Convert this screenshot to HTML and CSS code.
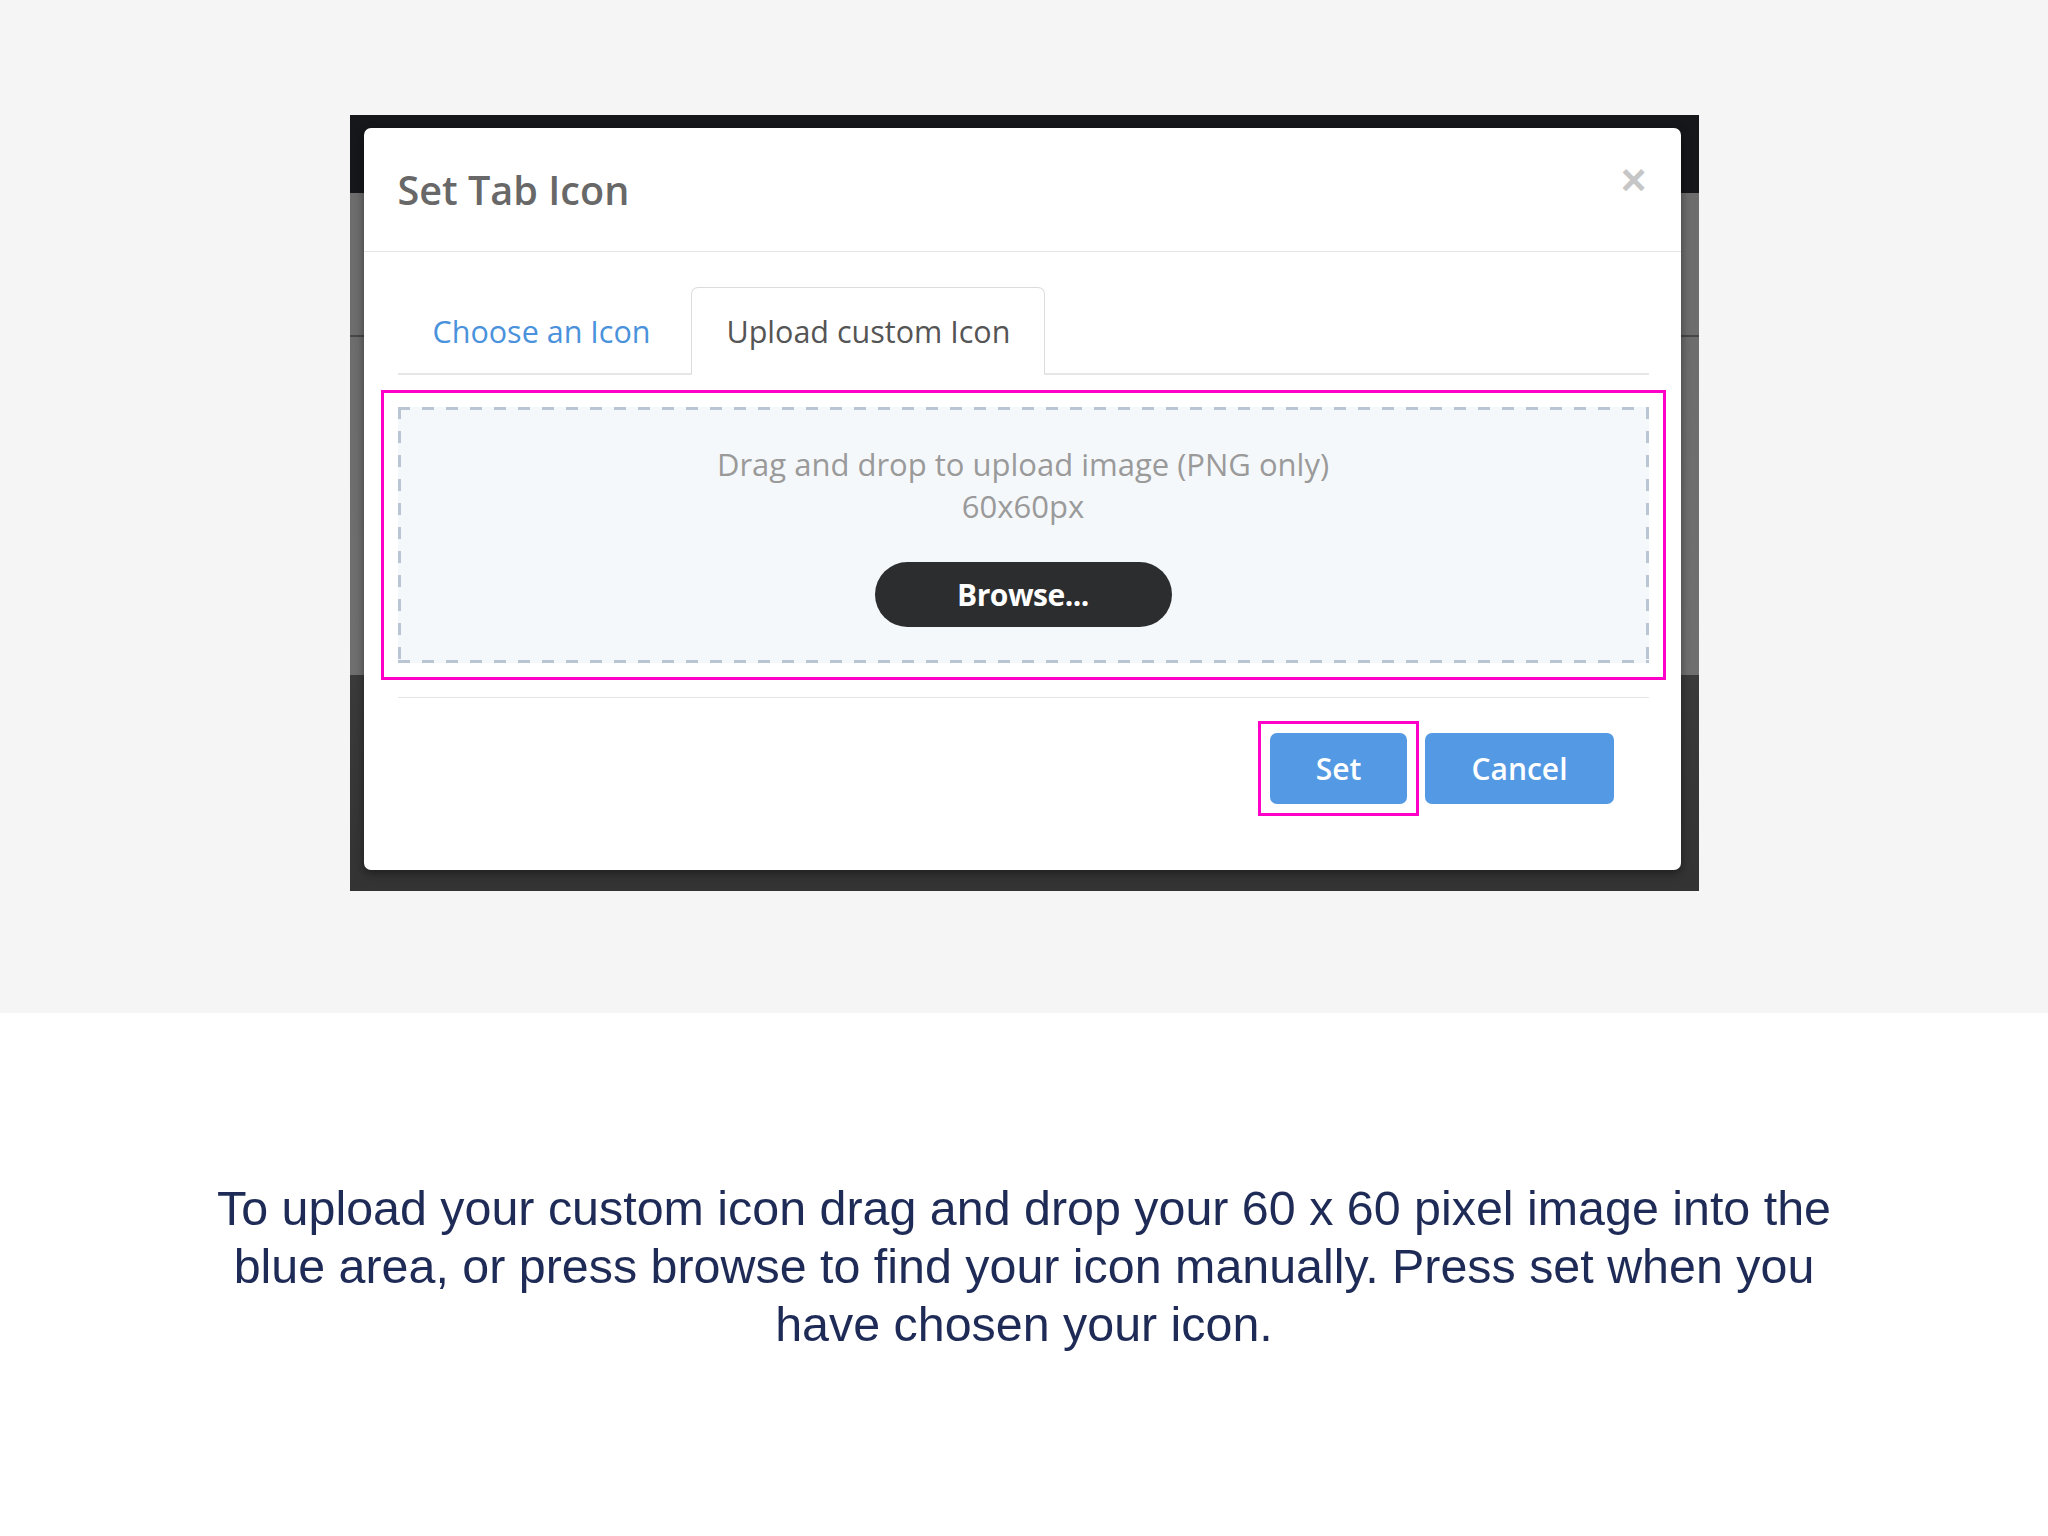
FILE: index.html
```html
<!DOCTYPE html>
<html lang="en">
<head>
<meta charset="utf-8">
<title>Set Tab Icon</title>
<link rel="stylesheet" href="styles.css">
</head>
<body>
<section class="stage">
  <div class="frame">
    <div class="modal">
      <header class="modal-header">
        <h2 class="modal-title">Set Tab Icon</h2>
        <span class="close">&times;</span>
      </header>
      <div class="modal-body">
        <ul class="tabs">
          <li class="tab"><a class="tab-link">Choose an Icon</a></li>
          <li class="tab tab-active"><a class="tab-link">Upload custom Icon</a></li>
        </ul>
        <div class="dropzone highlight">
          <p class="drop-text">Drag and drop to upload image (PNG only)<br>60x60px</p>
          <button class="browse">Browse...</button>
        </div>
      </div>
      <footer class="modal-footer">
        <span class="highlight-small"><button class="btn">Set</button></span>
        <button class="btn">Cancel</button>
      </footer>
    </div>
  </div>
</section>
<section class="caption">
  <p class="caption-text">To upload your custom icon drag and drop your 60 x 60 pixel image into the blue area, or press browse to find your icon manually. Press set when you have chosen your icon.</p>
</section>
</body>
</html>
```
FILE: styles.css
```css
* { box-sizing: border-box; }
html, body { margin: 0; padding: 0; }
body {
  width: 2048px;
  min-height: 1536px;
  background: #ffffff;
  font-family: "Open Sans", "Liberation Sans", sans-serif;
}

.stage {
  height: 1013px;
  background: #f5f5f5;
  padding-top: 115px;
  display: flex;
  justify-content: center;
  align-items: flex-start;
}

.frame {
  width: 1349px;
  height: 776px;
  padding: 13px 18px 21px 14px;
  background: linear-gradient(to bottom,
    #15171b 0, #15171b 78px,
    #6d6d6d 78px, #6d6d6d 220px,
    #474747 220px, #474747 222px,
    #6d6d6d 222px, #6f6f6f 560px,
    #3a3a3a 560px, #333333 776px);
}

.modal {
  width: 1317px;
  height: 742px;
  background: #ffffff;
  border-radius: 7px;
  box-shadow: 0 3px 10px rgba(0, 0, 0, 0.45);
  display: flex;
  flex-direction: column;
}

.modal-header {
  height: 124px;
  border-bottom: 1px solid #e5e5e5;
  padding: 0 34px 0 34px;
  display: flex;
  justify-content: space-between;
  align-items: flex-start;
}

.modal-title {
  margin: 0;
  align-self: center;
  margin-top: 2px;
  font-size: 39.6px;
  font-weight: 600;
  line-height: 1.1;
  color: #686868;
}

.close {
  margin-top: 30px;
  font-family: "Liberation Sans", Arial, sans-serif;
  font-size: 44px;
  font-weight: 700;
  line-height: 1;
  color: #c6c6c6;
}

.modal-body {
  padding: 35px 32px 0 34px;
}

.tabs {
  list-style: none;
  margin: 0;
  padding: 0;
  display: flex;
  border-bottom: 2px solid #e6e6e6;
}

.tab {
  height: 88px;
  margin-right: 6px;
  margin-bottom: -2px;
  border: 1px solid transparent;
  border-radius: 7px 7px 0 0;
  display: flex;
  align-items: center;
}

.tab-link {
  padding: 0 34px;
  font-size: 30.5px;
  color: #4a92dc;
}

.tab-active {
  border-color: #dcdcdc;
  border-bottom-color: #ffffff;
  background: #ffffff;
}

.tab-active .tab-link {
  color: #555555;
}

.dropzone {
  margin-top: 32px;
  height: 256px;
  padding-top: 36px;
  background:
    repeating-linear-gradient(to right, #b9c5d3 0, #b9c5d3 12px, transparent 12px, transparent 24px) left top / 100% 3px no-repeat,
    repeating-linear-gradient(to right, #b9c5d3 0, #b9c5d3 12px, transparent 12px, transparent 24px) left bottom / 100% 3px no-repeat,
    repeating-linear-gradient(to bottom, #b9c5d3 0, #b9c5d3 12px, transparent 12px, transparent 24px) left top / 3px 100% no-repeat,
    repeating-linear-gradient(to bottom, #b9c5d3 0, #b9c5d3 12px, transparent 12px, transparent 24px) right top / 3px 100% no-repeat,
    #f5f8fa;
  display: flex;
  flex-direction: column;
  align-items: center;
}

.highlight {
  outline: 3px solid #ff00c8;
  outline-offset: 14px;
}

.drop-text {
  margin: 0;
  font-size: 31px;
  line-height: 42px;
  color: #9a9a9a;
  text-align: center;
}

.browse {
  margin-top: 35px;
  width: 297px;
  height: 65px;
  border: none;
  border-radius: 33px;
  background: #2b2d2f;
  color: #ffffff;
  font-family: "Open Sans", sans-serif;
  font-size: 30px;
  font-weight: 700;
  letter-spacing: -0.5px;
}

.modal-footer {
  margin: 34px 32px 0 34px;
  border-top: 1px solid #e5e5e5;
  padding: 35px 35px 0 0;
  display: flex;
  justify-content: flex-end;
  align-items: flex-start;
  gap: 18px;
}

.btn {
  height: 71px;
  padding: 0 46px;
  border: none;
  border-radius: 7px;
  background: #5499e3;
  color: #ffffff;
  font-family: "Open Sans", sans-serif;
  font-size: 30px;
  font-weight: 600;
}

.highlight-small {
  display: flex;
  outline: 3px solid #ff00c8;
  outline-offset: 9px;
}

.caption {
  display: flex;
  justify-content: center;
  padding-top: 166px;
}

.caption-text {
  margin: 0;
  max-width: 1660px;
  font-family: "Liberation Sans", Arial, sans-serif;
  font-size: 48.4px;
  line-height: 58px;
  color: #1f2b57;
  text-align: center;
}
```
